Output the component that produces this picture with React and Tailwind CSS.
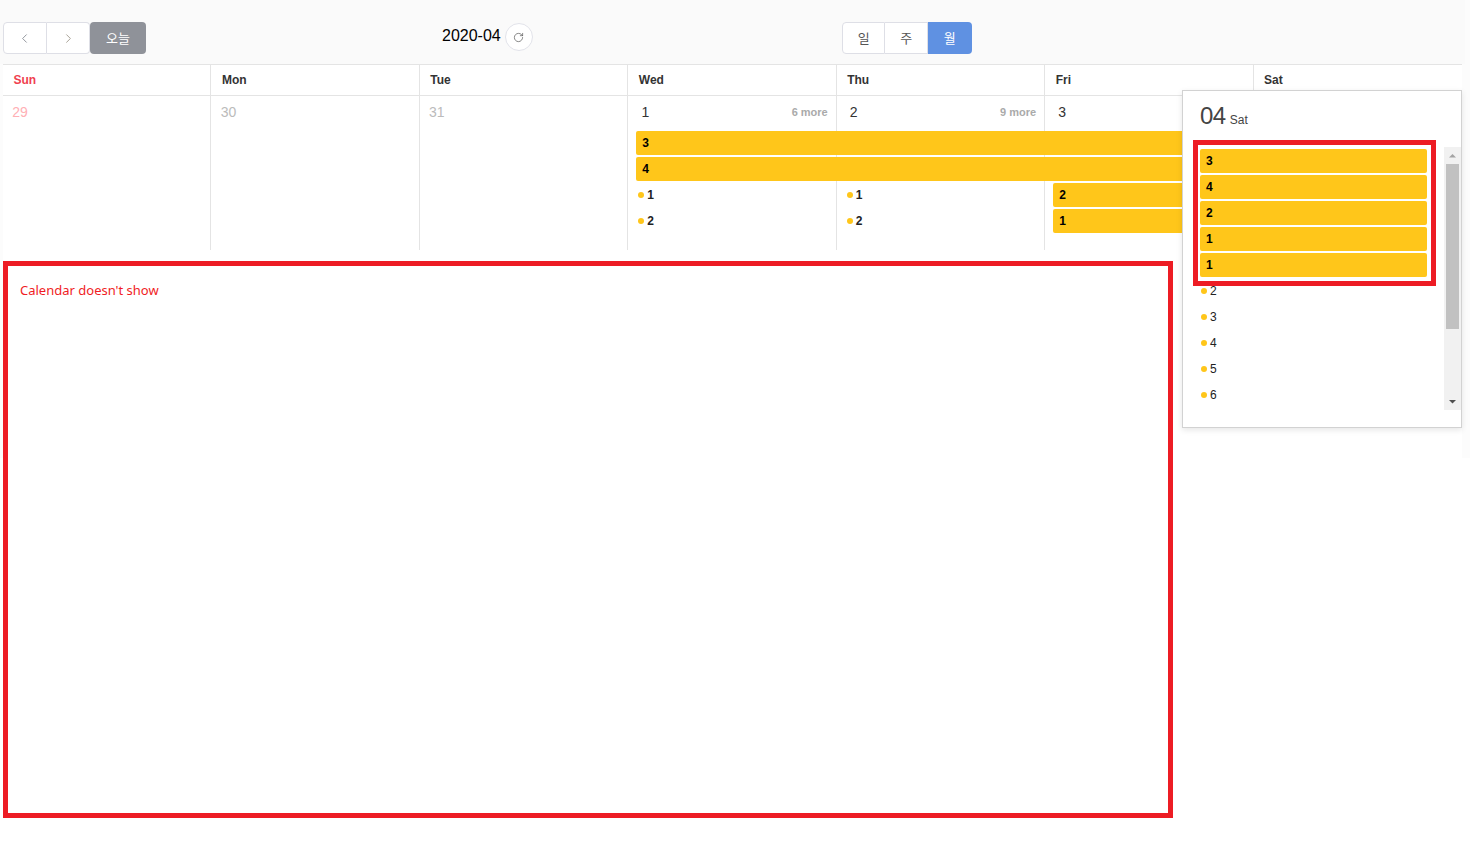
import React from "react";
import { ChevronLeft, ChevronRight, RotateCw } from "lucide-react";

const days = ["Sun", "Mon", "Tue", "Wed", "Thu", "Fri", "Sat"];

const Bar = ({ label, className = "" }) => (
  <div className={`h-6 bg-[#ffc61a] rounded-[2px] pl-[6px] text-xs font-bold leading-6 text-black ${className}`}>
    {label}
  </div>
);

const Dot = ({ label }) => (
  <div className="h-6 flex items-center pl-[2px] text-xs font-bold text-[#222]">
    <span className="w-[6px] h-[6px] rounded-full bg-[#ffc61a] mr-[3px] -mt-[1px]"></span>
    {label}
  </div>
);

const DotPlain = ({ label }) => (
  <div className="h-6 flex items-center pl-[1px] text-xs text-[#222]">
    <span className="w-[6px] h-[6px] rounded-full bg-[#ffc61a] mr-[3px] -mt-[1px]"></span>
    {label}
  </div>
);

const DateCell = ({ num, more, className = "text-[#333]" }) => (
  <div className="h-[35px] flex items-start justify-between pl-[9px] pr-[9px] pt-[8px]">
    <span className={`w-4 text-center text-sm leading-4 ${className}`}>{num}</span>
    {more && <span className="text-[11px] font-bold leading-4 text-[#aaa]">{more}</span>}
  </div>
);

const App = () => {
  return (
    <div className="relative w-[1470px] h-[847px] bg-white overflow-hidden font-['Liberation_Sans','Noto_Sans_CJK_KR',sans-serif]">
      {/* page background strip */}
      <div className="h-[458px] bg-[#fcfcfc] px-[3px] w-full">
        <div className="w-[1459px] h-full bg-white">
          <div className="h-[64px] bg-[#fafafa] flex items-start pt-[22px] -mx-[3px] pl-[3px]">
            <div className="flex h-8">
              <button className="w-[44px] bg-white border border-[#dedfe6] rounded-l-[4px] flex items-center justify-center pr-[2px] text-[#70757f]">
                <ChevronLeft size={15} strokeWidth={1.2} />
              </button>
              <button className="w-[43px] bg-white border border-l-0 border-[#dedfe6] rounded-r-[4px] flex items-center justify-center text-[#8c8474]">
                <ChevronRight size={15} strokeWidth={1.2} />
              </button>
              <button className="w-[56px] bg-[#8f9299] rounded-[4px] text-white text-[13px] font-['Noto_Sans_CJK_KR',sans-serif]">오늘</button>
            </div>
            <div className="ml-[296px] flex items-start">
              <span className="text-base leading-[26px] mt-[1px] text-black">2020-04</span>
              <button className="ml-[4px] mt-[1px] w-7 h-7 bg-white border border-[#e2e3ea] rounded-full flex items-center justify-center text-[#555]">
                <RotateCw size={11} strokeWidth={1.5} />
              </button>
            </div>
            <div className="ml-[309px] flex h-8 text-[13px] text-[#555] font-['Noto_Sans_CJK_KR',sans-serif]">
              <button className="w-[43px] pl-[1px] bg-white border border-[#dedfe6] rounded-l-[4px]">일</button>
              <button className="w-[43px] pl-[1px] bg-white border-y border-r border-[#dedfe6]">주</button>
              <button className="w-[44px] bg-[#5f91e2] text-white rounded-r-[4px]">월</button>
            </div>
          </div>

          {/* weekday header */}
          <div className="grid grid-cols-7 h-[32px] bg-white border-y border-[#e4e4e4]">
            {days.map((d, i) => (
              <div
                key={d}
                className={`pl-[10.5px] text-xs font-bold leading-[30px] border-[#e4e4e4] ${i < 6 ? "border-r" : ""} ${i === 0 ? "text-[#f0404f]" : "text-[#333]"}`}
              >
                {d}
              </div>
            ))}
          </div>

          {/* month row */}
          <div className="relative h-[154px] bg-white">
            <div className="absolute inset-0 grid grid-cols-7">
              {days.map((d, i) => (
                <div key={d} className={`border-[#e4e4e4] ${i < 6 ? "border-r" : ""}`}></div>
              ))}
            </div>
            <div className="relative grid grid-cols-7 gap-y-[2px] auto-rows-[24px]">
              <div className="col-start-1 row-start-1 h-[35px]"><DateCell num="29" className="text-[#ffb0b5]" /></div>
              <div className="col-start-2 row-start-1 h-[35px]"><DateCell num="30" className="text-[#bbb]" /></div>
              <div className="col-start-3 row-start-1 h-[35px]"><DateCell num="31" className="text-[#bbb]" /></div>
              <div className="col-start-4 row-start-1 h-[35px]"><DateCell num="1" more="6 more" /></div>
              <div className="col-start-5 row-start-1 h-[35px]"><DateCell num="2" more="9 more" /></div>
              <div className="col-start-6 row-start-1 h-[35px]"><DateCell num="3" /></div>
              <Bar label="3" className="col-start-4 col-end-8 row-start-2 ml-2 mt-[9px]" />
              <Bar label="4" className="col-start-4 col-end-8 row-start-3 ml-2 mt-[9px]" />
              <div className="col-start-4 row-start-4 ml-2 mt-[9px]"><Dot label="1" /></div>
              <div className="col-start-5 row-start-4 ml-2 mt-[9px]"><Dot label="1" /></div>
              <Bar label="2" className="col-start-6 col-end-8 row-start-4 ml-2 mt-[9px]" />
              <div className="col-start-4 row-start-5 ml-2 mt-[9px]"><Dot label="2" /></div>
              <div className="col-start-5 row-start-5 ml-2 mt-[9px]"><Dot label="2" /></div>
              <Bar label="1" className="col-start-6 col-end-8 row-start-5 ml-2 mt-[9px]" />
            </div>
          </div>
        </div>
      </div>

      {/* day popover */}
      <div className="absolute left-[1182px] top-[90px] w-[280px] h-[338px] bg-white border border-[#d2d2d2] shadow-[0_2px_6px_rgba(0,0,0,0.1)]">
        <div className="flex items-baseline pl-[17px] pt-[11px] h-[56px] text-[#444]">
          <span className="text-2xl leading-7 tracking-[-0.5px]">04</span>
          <span className="ml-[4px] text-xs">Sat</span>
        </div>
        <div className="flex">
          <div className="w-[261px] pl-[17px] pr-[17px] pt-[2px] flex flex-col gap-[2px]">
            <Bar label="3" />
            <Bar label="4" />
            <Bar label="2" />
            <Bar label="1" />
            <Bar label="1" />
            <DotPlain label="2" />
            <DotPlain label="3" />
            <DotPlain label="4" />
            <DotPlain label="5" />
            <DotPlain label="6" />
          </div>
          <div className="w-[17px] h-[263px] bg-[#f1f1f1] flex flex-col items-center">
            <svg width="9" height="17" viewBox="0 0 9 17" className="shrink-0">
              <path d="M1 10.5 L4.5 7 L8 10.5 Z" fill="#a3a3a3" />
            </svg>
            <div className="w-[13px] h-[165px] bg-[#c1c1c1] shrink-0"></div>
            <div className="flex-1"></div>
            <svg width="9" height="17" viewBox="0 0 9 17" className="shrink-0">
              <path d="M1 7 L8 7 L4.5 10.5 Z" fill="#505050" />
            </svg>
          </div>
        </div>
      </div>

      {/* red annotations */}
      <div className="absolute left-[1193px] top-[140px] w-[243px] h-[146px] border-[5px] border-[#ed1c24]"></div>
      <div className="absolute left-[3px] top-[261px] w-[1170px] h-[557px] border-[5px] border-[#ed1c24] bg-white pl-3 pt-[15px] text-[13px] leading-[18px] text-[#f01c24] font-['Noto_Sans',sans-serif]">
        Calendar doesn't show
      </div>
    </div>
  );
};

export default App;
